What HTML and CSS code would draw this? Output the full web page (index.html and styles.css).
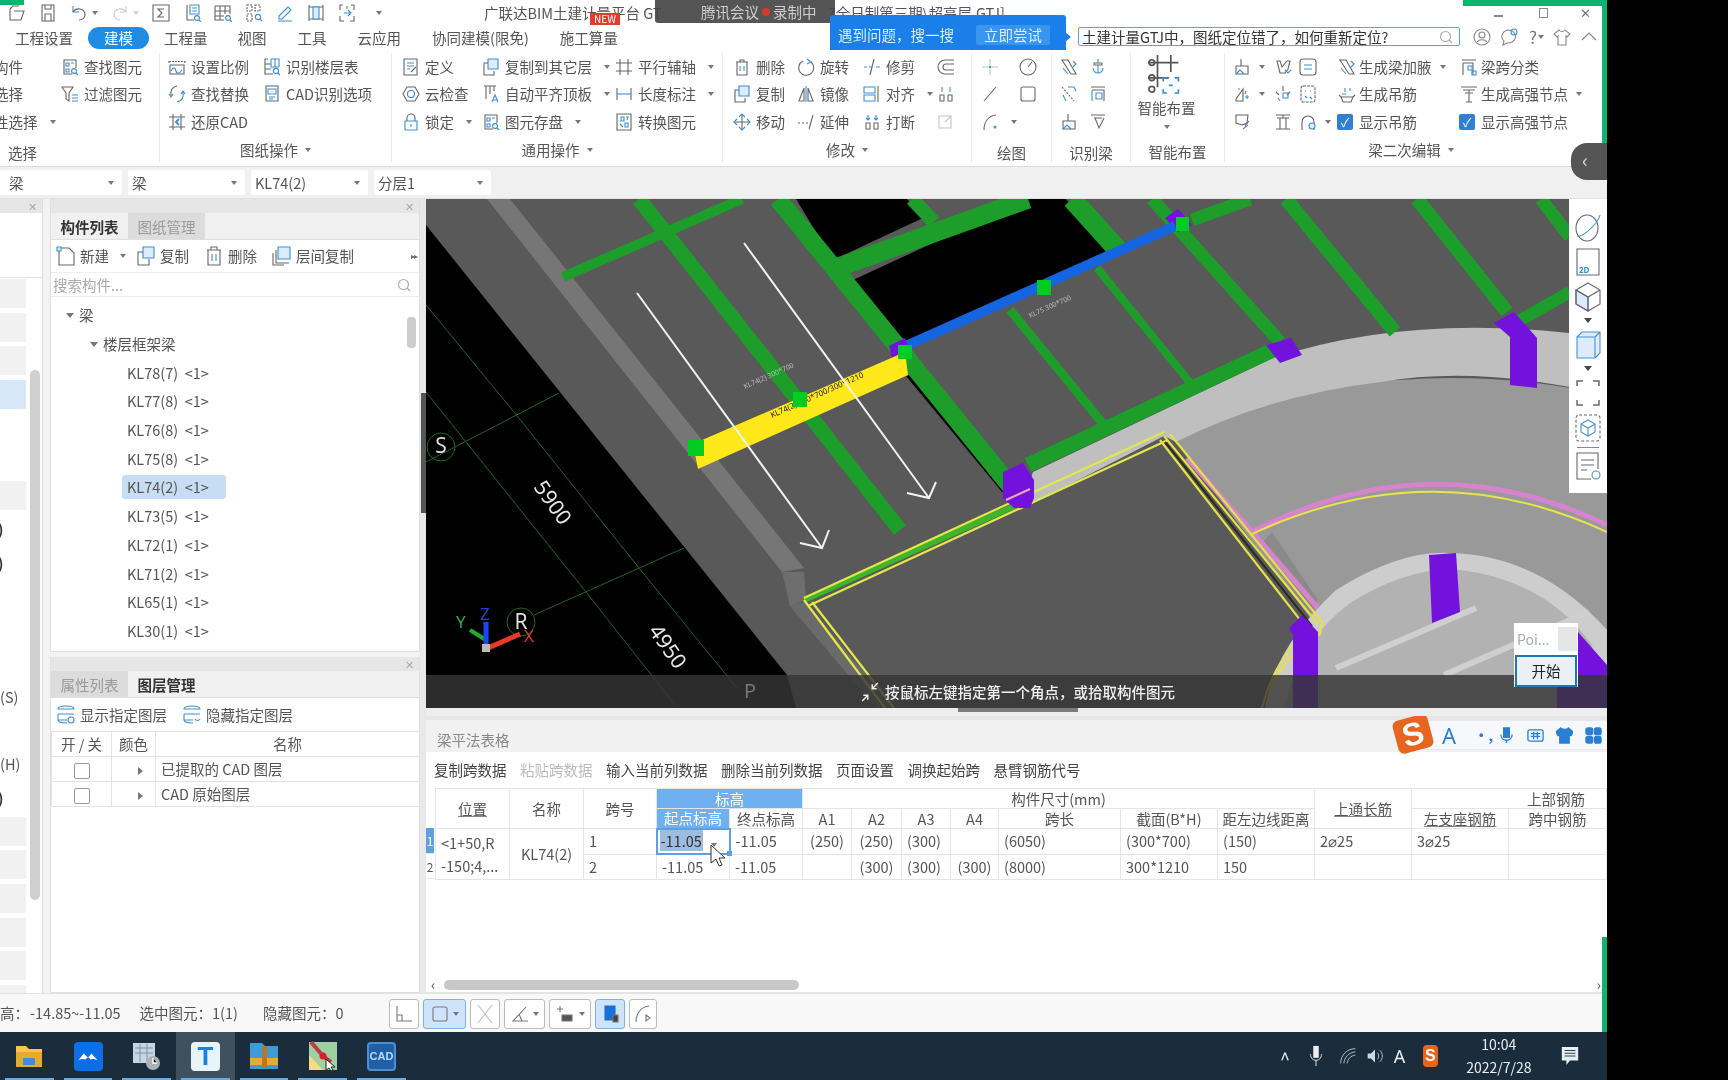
FILE: index.html
```html
<!DOCTYPE html>
<html lang="zh-CN">
<head>
<meta charset="utf-8">
<title>广联达BIM土建计量平台 GTJ2021</title>
<link rel="stylesheet" href="styles.css">
</head>
<body>
<svg class="defs" aria-hidden="true">
<symbol id="q-open" viewBox="0 0 18 18"><path d="M2 5v11h11l3-9H6M2 5l3-3h6"/></symbol>
<symbol id="q-save" viewBox="0 0 18 18"><path d="M3 1h12v16H3zM6 1v4h6V1M6 10h6v7H6z"/></symbol>
<symbol id="q-undo" viewBox="0 0 18 18"><path d="M3 2v6h6" class="b"/><path d="M3 8c3-5 12-4 12 3 0 3-3 5-6 5"/></symbol>
<symbol id="q-redo" viewBox="0 0 18 18"><path d="M15 2v6H9"/><path d="M15 8c-3-5-12-4-12 3 0 3 3 5 6 5"/></symbol>
<symbol id="q-sigma" viewBox="0 0 18 18"><path d="M1 1h16v16H1z"/><path d="M12 5H6l4 4-4 4h6"/></symbol>
<symbol id="q-list" viewBox="0 0 18 18"><path d="M4 1v15h7"/><path class="b" d="M7 1h9v9H7zM9 4h5M9 7h5"/><circle class="b" cx="14" cy="14" r="2.400"/><path class="b" d="M16 16l2 2"/></symbol>
<symbol id="q-tbl" viewBox="0 0 18 18"><path d="M1 2h15v8M1 2v14h9M1 7h15M1 12h9M6 2v14M11 2v8"/><circle class="b" cx="14" cy="14" r="2.400"/><path class="b" d="M16 16l2 2"/></symbol>
<symbol id="q-dash" viewBox="0 0 18 18"><path d="M2 1h5v6H2zM10 1h5v6h-5zM2 10h5v7H2z" stroke-dasharray="2 1"/><circle class="b" cx="13" cy="13" r="2.600"/><path class="b" d="M15 15l2 2"/></symbol>
<symbol id="q-pen" viewBox="0 0 18 18"><path d="M3 12l9-9 3 3-9 9H3zM2 17h14" class="b"/></symbol>
<symbol id="q-bars" viewBox="0 0 18 18"><path d="M2 1v16M16 1v16M2 3h14M2 15h14"/><path class="b f" d="M6 3h6v12H6z"/></symbol>
<symbol id="q-brk" viewBox="0 0 18 18"><path d="M5 1H2v5M13 1h3v5M2 12v5h4M16 12v5h-4"/><path class="b" d="M6 9h6M10 6l3 3-3 3M9 2v3"/></symbol>
<symbol id="i-find" viewBox="0 0 18 18"><path d="M11 16H3V2h12v8"/><path class="b" d="M5 5h3v3H5zM5 11h3v3H5zM10 5h3"/><circle class="b" cx="13" cy="13" r="2.400"/><path class="b" d="M15 15l2 2"/></symbol>
<symbol id="i-filter" viewBox="0 0 18 18"><path d="M1 2h11L8 8v8L5 14V8z"/><path class="b" d="M11 10h6M11 13h6M11 16h6"/></symbol>
<symbol id="i-scale" viewBox="0 0 18 18"><path d="M1 5V2m16 3V2M1 3.500h16" stroke-dasharray="2 1"/><path d="M2 7h14v9H2z"/><path class="b" d="M3 13c2-4 4-4 5 0s4 2 6-1"/></symbol>
<symbol id="i-floors" viewBox="0 0 18 18"><path d="M5 1H2v15h8M2 6h6M2 11h6"/><path class="b" d="M8 1h8v8M8 1v8h8M12 1v8"/><circle class="b" cx="13" cy="13" r="2.600"/><path class="b" d="M15 15l2 2"/></symbol>
<symbol id="i-replace" viewBox="0 0 18 18"><path d="M9 1C4 2 2 5 3 11"/><path class="b" d="M9 17c5-1 7-4 6-10M1 9l2 3 2-3M13 9l2-3 2 3"/></symbol>
<symbol id="i-cad" viewBox="0 0 18 18"><path d="M3 1h12v15H3z"/><path class="b" d="M5 4h8v5H5zM6 12h6M6 14h4"/></symbol>
<symbol id="i-restore" viewBox="0 0 18 18"><path d="M1 4h16M1 14h16M5 1v16M13 1v16"/><path class="b" d="M11 6L8 9l3 3" stroke-width="2"/></symbol>
<symbol id="i-define" viewBox="0 0 18 18"><path d="M2 1h13v16H2z"/><path class="b" d="M5 5h7M5 8h7M5 11h3"/><path d="M9 14l5-5"/></symbol>
<symbol id="i-cloud" viewBox="0 0 18 18"><path d="M5 2h8l4 7-4 7H5L1 9z"/><circle class="b" cx="9" cy="9" r="3.500"/></symbol>
<symbol id="i-lock" viewBox="0 0 18 18"><path d="M5 8V5a4 4 0 018 0v3"/><path class="b" d="M3 8h12v9H3zM9 11v3"/></symbol>
<symbol id="i-copy" viewBox="0 0 18 18"><path class="b f" d="M6 1h10v10H6z"/><path d="M6 5H2v12h10v-4"/></symbol>
<symbol id="i-top" viewBox="0 0 18 18"><path d="M2 1h12M4 1v13M8 1v8M12 1v5"/><path class="b" d="M10 17l3-7 3 7M11 15h4"/></symbol>
<symbol id="i-par" viewBox="0 0 18 18"><path d="M1 5h16M1 13h16M5 1v16M13 1v16"/></symbol>
<symbol id="i-len" viewBox="0 0 18 18"><path d="M2 3v12M16 3v12"/><path class="b" d="M2 9h14"/></symbol>
<symbol id="i-conv" viewBox="0 0 18 18"><path d="M2 1h14v16H2z"/><path class="b" d="M6 4h3v4H6zM10 10h3v4h-3zM11 4h2l-1 3M5 11l3 3"/></symbol>
<symbol id="i-del" viewBox="0 0 18 18"><path d="M3 4h12M7 4V2h4v2M4 4v13h10V4"/><path class="b" d="M7 8v5M11 8v5"/></symbol>
<symbol id="i-rot" viewBox="0 0 18 18"><path d="M6 3a7.500 7.500 0 108 1"/><path class="b" d="M10 1l4 3-4 2"/></symbol>
<symbol id="i-mir" viewBox="0 0 18 18"><path d="M7 3L2 16h5zM11 3l5 13h-5z"/><path class="b" d="M9 1v16"/></symbol>
<symbol id="i-move" viewBox="0 0 18 18"><path d="M9 1v16M1 9h16"/><path class="b" d="M6 4l3-3 3 3M6 14l3 3 3-3M4 6L1 9l3 3M14 6l3 3-3 3"/></symbol>
<symbol id="i-ext" viewBox="0 0 18 18"><path d="M1 10h2M5 10h2M9 10h2"/><path d="M12 16l4-14"/></symbol>
<symbol id="i-trim" viewBox="0 0 18 18"><path d="M11 1L7 17"/><path class="b" d="M1 9h3M6 9h3M13 9h4"/></symbol>
<symbol id="i-align" viewBox="0 0 18 18"><path class="b" d="M1 2h11v6H1zM1 10h11v6H1z"/><path d="M15 1v16"/></symbol>
<symbol id="i-brk" viewBox="0 0 18 18"><path d="M3 10h4v6H3zM11 10h4v6h-4z"/><path class="b" d="M5 2v5M13 2v5M3 5l2 2 2-2M11 5l2 2 2-2"/></symbol>
<symbol id="i-off" viewBox="0 0 18 18"><path d="M17 2H8a7 7 0 000 14h9M17 6H9a3 3 0 000 6h8"/></symbol>
<symbol id="i-dots" viewBox="0 0 18 18"><path d="M3 10h4v6H3zM11 10h4v6h-4z"/><path class="b" d="M5 2v5M13 2v5"/></symbol>
<symbol id="i-ext2" viewBox="0 0 18 18" ><path class="g" d="M2 3h12v12H2zM8 9l6-6"/></symbol>
<symbol id="i-cross" viewBox="0 0 18 18"><path class="g" d="M9 1v6M9 11v6M1 9h6M11 9h6"/><circle class="b" cx="9" cy="9" r=".8"/></symbol>
<symbol id="i-gauge" viewBox="0 0 18 18"><circle cx="9" cy="9" r="8"/><path d="M9 9l4-5"/></symbol>
<symbol id="i-line" viewBox="0 0 18 18"><path d="M3 16L15 2"/></symbol>
<symbol id="i-sq" viewBox="0 0 18 18"><rect x="2" y="2" width="14" height="14" rx="2"/></symbol>
<symbol id="i-arc" viewBox="0 0 18 18"><path d="M3 17C3 8 8 3 15 2"/><circle class="b" cx="14" cy="14" r="1"/></symbol>
<symbol id="i-b1" viewBox="0 0 18 18"><path d="M2 2h6L16 16h-5z"/><path class="b" d="M3 10l5 6M13 3l3 3-3 3"/></symbol>
<symbol id="i-b2" viewBox="0 0 18 18"><path d="M5 5h8v2H5z"/><path class="b" d="M9 1v4M4 10a5 5 0 0010 0M9 7v8"/></symbol>
<symbol id="i-b3" viewBox="0 0 18 18"><path d="M2 2l12 14" stroke-dasharray="2 1.500"/><path class="b" d="M8 2h6l2 4M3 10l3 6"/></symbol>
<symbol id="i-b4" viewBox="0 0 18 18"><path d="M2 2h14M3 5h12v11"/><path class="b" d="M3 5v11M7 8h6v6H7z"/></symbol>
<symbol id="i-b6" viewBox="0 0 18 18"><path d="M2 2h14M5 5h8M6 5l4 10 5-10"/></symbol>
<symbol id="i-e1" viewBox="0 0 18 18"><path d="M8 1v7H3v8h12V8H8"/><path class="b" d="M3 16l4-4 4 4"/></symbol>
<symbol id="i-e2" viewBox="0 0 18 18"><path d="M3 3h3l2 6 5-6h3l-2 8-3 4H6z"/><path class="b" d="M11 12l3 3 3-3"/></symbol>
<symbol id="i-e3" viewBox="0 0 18 18"><rect x="1" y="1" width="16" height="16" rx="3"/><path class="b" d="M5 7h8M5 11h8"/></symbol>
<symbol id="i-e4" viewBox="0 0 18 18"><path d="M10 16V4l-7 10v2zM13 6l-1 3"/><path class="b" d="M5 4h2M12 12h4M14 10v4"/></symbol>
<symbol id="i-e6" viewBox="0 0 18 18"><path d="M9 1v5M2 7l3 3M16 7l-3 3"/><path class="b" d="M9 8h5v5H9zM4 13l2 3"/></symbol>
<symbol id="i-e7" viewBox="0 0 18 18"><rect x="2" y="1" width="14" height="16" rx="2" stroke-dasharray="3 1"/><path class="b" d="M6 6h1M11 6h1M6 11l2 2M11 12l2 2"/></symbol>
<symbol id="i-e8" viewBox="0 0 18 18"><path d="M3 2h12l-1 8-5 2-6-2zM12 13l4-5"/><path class="b" d="M10 16l5-4"/></symbol>
<symbol id="i-e9" viewBox="0 0 18 18"><path d="M2 2h14M9 2v3M3 5h12M6 5v11M12 5v11M2 16h14"/></symbol>
<symbol id="i-e10" viewBox="0 0 18 18"><path d="M3 17V9a6 6 0 0112 0v8"/><circle class="b f" cx="13" cy="13" r="3"/></symbol>
<symbol id="i-e11" viewBox="0 0 18 18"><path d="M2 2h14M3 5h10v12M3 5v12"/><path class="b" d="M8 8h4v4H8zM12 13h4v4h-4z"/></symbol>
<symbol id="i-e12" viewBox="0 0 18 18"><path d="M1 2h16M3 5h12M9 5v12M5 8h8M6 17h6"/></symbol>
<symbol id="i-e13" viewBox="0 0 18 18"><path class="b" d="M7 3v4M4 9h4M12 3v3"/><path d="M3 12h12l-2 5H5zM1 10l2 2M17 10l-2 2"/></symbol>
<symbol id="i-new" viewBox="0 0 20 20"><path d="M3 2h10l5 5v12H3z"/><path class="b f" d="M1 1h4v4H1z"/></symbol>
<symbol id="i-tcopy" viewBox="0 0 20 20"><path class="b f" d="M7 1h11v11H7z"/><path d="M7 6H2v13h11v-6"/></symbol>
<symbol id="i-tdel" viewBox="0 0 20 20"><path d="M3 4h14M7 4V1h6v3M4 4v15h12V4"/><path class="b" d="M8 8v7M12 8v7"/></symbol>
<symbol id="i-tlay" viewBox="0 0 20 20"><path class="b f" d="M6 1h12v12H6z"/><path d="M4 4v13h13M1 7v12h11"/></symbol>
<symbol id="i-lshow" viewBox="0 0 20 20"><path class="b" d="M2 4c0-4 16-4 16 0H2zM2 9h16M2 15c0 3 7 3 9 3M2 9v6h9"/><circle class="b" cx="15" cy="15" r="3"/></symbol>
<symbol id="i-lhide" viewBox="0 0 20 20"><path class="b" d="M2 4c0-4 16-4 16 0H2zM2 9h16M2 15c0 3 7 3 9 3M2 9v6h9M13 14c1 2 4 2 5 0"/></symbol>
<symbol id="i-mag" viewBox="0 0 14 14"><circle cx="6.500" cy="6.500" r="5"/><path d="M10 10l3 3"/></symbol>
</svg>

<div class="screen">
  <header class="titlebar">
    <svg class="ico"><use href="#q-open"/></svg>
    <svg class="ico"><use href="#q-save"/></svg>
    <svg class="ico"><use href="#q-undo"/></svg><i class="car tight"></i>
    <svg class="ico faded"><use href="#q-redo"/></svg><i class="car tight faded"></i>
    <svg class="ico"><use href="#q-sigma"/></svg>
    <svg class="ico"><use href="#q-list"/></svg>
    <svg class="ico"><use href="#q-tbl"/></svg>
    <svg class="ico"><use href="#q-dash"/></svg>
    <svg class="ico"><use href="#q-pen"/></svg>
    <svg class="ico"><use href="#q-bars"/></svg>
    <svg class="ico"><use href="#q-brk"/></svg>
    <i class="car"></i>
    <span class="title">广联达BIM土建计量平台 GT</span>
    <span class="title-rest">7全日制第三期\超高层.GTJ]</span>
    <span class="new-badge">NEW</span>
    <div class="rec"><span>腾讯会议</span><b class="rec-dot"></b><span>录制中</span></div>
    <span class="stripe-l"></span><span class="stripe-r"></span>
    <div class="winctl"><span class="wmin"></span><span class="wres"></span><span class="wclose">✕</span></div>
  </header>

  <nav class="tabs">
    <span class="tab t1">工程设置</span>
    <span class="tab active">建模</span>
    <span class="tab">工程量</span>
    <span class="tab wide">视图</span>
    <span class="tab wide">工具</span>
    <span class="tab wide">云应用</span>
    <span class="tab wide">协同建模(限免)</span>
    <span class="tab wide">施工算量</span>
    <div class="search"><span>土建计量GTJ中，图纸定位错了，如何重新定位?</span><svg class="mag"><use href="#i-mag"/></svg></div>
    <div class="topicons">
      <svg class="ti" viewBox="0 0 18 18"><circle cx="9" cy="9" r="8"/><circle cx="9" cy="7" r="3"/><path d="M4 14c2-3 8-3 10 0"/></svg>
      <svg class="ti" viewBox="0 0 18 18"><path d="M9 2a7.500 6.500 0 00-5 11l-1 4 4-2a7.500 6.500 0 002-13z"/><circle class="b" cx="14" cy="4" r="3"/></svg>
      <span class="qm">?</span><i class="car"></i>
      <svg class="ti" viewBox="0 0 18 18"><path d="M6 2L1 6l3 3 1-1v9h8V8l1 1 3-3-5-4c-1 2-5 2-6 0z"/></svg>
      <svg class="ti" viewBox="0 0 18 18"><path d="M2 12l7-7 7 7"/></svg>
    </div>
    <div class="promo"><span>遇到问题，搜一搜</span><span class="try">立即尝试</span></div>
  </nav>

  <section class="ribbon">
    <div class="grp g1">
      <div class="rows">
        <div class="it">构件</div><div class="it">选择</div><div class="it">性选择<i class="car"></i></div>
        <div class="it"><svg class="ico"><use href="#i-find"/></svg>查找图元</div>
        <div class="it"><svg class="ico"><use href="#i-filter"/></svg>过滤图元</div>
      </div>
      <div class="lbl">选择</div>
    </div>
    <div class="grp g2">
      <div class="rows">
        <div class="it"><svg class="ico"><use href="#i-scale"/></svg>设置比例</div>
        <div class="it"><svg class="ico"><use href="#i-replace"/></svg>查找替换</div>
        <div class="it"><svg class="ico"><use href="#i-restore"/></svg>还原CAD</div>
        <div class="it"><svg class="ico"><use href="#i-floors"/></svg>识别楼层表</div>
        <div class="it"><svg class="ico"><use href="#i-cad"/></svg>CAD识别选项</div>
      </div>
      <div class="lbl">图纸操作<i class="car"></i></div>
    </div>
    <div class="grp g3">
      <div class="rows">
        <div class="it"><svg class="ico"><use href="#i-define"/></svg>定义</div>
        <div class="it"><svg class="ico"><use href="#i-cloud"/></svg>云检查</div>
        <div class="it"><svg class="ico"><use href="#i-lock"/></svg>锁定<i class="car"></i></div>
        <div class="it"><svg class="ico"><use href="#i-copy"/></svg>复制到其它层<i class="car"></i></div>
        <div class="it"><svg class="ico"><use href="#i-top"/></svg>自动平齐顶板<i class="car"></i></div>
        <div class="it"><svg class="ico"><use href="#i-find"/></svg>图元存盘<i class="car"></i></div>
        <div class="it"><svg class="ico"><use href="#i-par"/></svg>平行辅轴<i class="car"></i></div>
        <div class="it"><svg class="ico"><use href="#i-len"/></svg>长度标注<i class="car"></i></div>
        <div class="it"><svg class="ico"><use href="#i-conv"/></svg>转换图元</div>
      </div>
      <div class="lbl">通用操作<i class="car"></i></div>
    </div>
    <div class="grp g4">
      <div class="rows">
        <div class="it"><svg class="ico"><use href="#i-del"/></svg>删除</div>
        <div class="it"><svg class="ico"><use href="#i-copy"/></svg>复制</div>
        <div class="it"><svg class="ico"><use href="#i-move"/></svg>移动</div>
        <div class="it"><svg class="ico"><use href="#i-rot"/></svg>旋转</div>
        <div class="it"><svg class="ico"><use href="#i-mir"/></svg>镜像</div>
        <div class="it"><svg class="ico"><use href="#i-ext"/></svg>延伸</div>
        <div class="it"><svg class="ico"><use href="#i-trim"/></svg>修剪</div>
        <div class="it"><svg class="ico"><use href="#i-align"/></svg>对齐<i class="car"></i></div>
        <div class="it"><svg class="ico"><use href="#i-brk"/></svg>打断</div>
        <div class="it"><svg class="ico"><use href="#i-off"/></svg></div>
        <div class="it"><svg class="ico"><use href="#i-dots"/></svg></div>
        <div class="it"><svg class="ico"><use href="#i-ext2"/></svg></div>
      </div>
      <div class="lbl">修改<i class="car"></i></div>
    </div>
    <div class="grp g5">
      <div class="rows">
        <div class="it"><svg class="ico"><use href="#i-cross"/></svg></div>
        <div class="it"><svg class="ico"><use href="#i-line"/></svg></div>
        <div class="it"><svg class="ico"><use href="#i-arc"/></svg><i class="car"></i></div>
        <div class="it"><svg class="ico"><use href="#i-gauge"/></svg></div>
        <div class="it"><svg class="ico"><use href="#i-sq"/></svg></div>
      </div>
      <div class="lbl">绘图</div>
    </div>
    <div class="grp g6">
      <div class="rows">
        <div class="it"><svg class="ico"><use href="#i-b1"/></svg></div>
        <div class="it"><svg class="ico"><use href="#i-b3"/></svg></div>
        <div class="it"><svg class="ico"><use href="#i-e1"/></svg></div>
        <div class="it"><svg class="ico"><use href="#i-b2"/></svg></div>
        <div class="it"><svg class="ico"><use href="#i-b4"/></svg></div>
        <div class="it"><svg class="ico"><use href="#i-b6"/></svg></div>
      </div>
      <div class="lbl">识别梁</div>
    </div>
    <div class="grp g7">
      <div class="big">
        <svg class="bigico" viewBox="0 0 40 44"><path d="M0 10h32M0 26h22M10 2v34M24 2v18"/><circle cx="4" cy="10" r="3"/><circle cx="4" cy="26" r="3"/><circle cx="4" cy="38" r="3"/><path class="bb" d="M20 26h-4v4M28 26h4v4M20 42h-4v-4M28 42h4v-4M22 34h4"/></svg>
        <span>智能布置</span>
        <i class="car"></i>
      </div>
      <div class="lbl">智能布置</div>
    </div>
    <div class="grp g8">
      <div class="rows">
        <div class="it"><svg class="ico"><use href="#i-e1"/></svg><i class="car"></i></div>
        <div class="it"><svg class="ico"><use href="#i-e4"/></svg><i class="car"></i></div>
        <div class="it"><svg class="ico"><use href="#i-e8"/></svg></div>
        <div class="it"><svg class="ico"><use href="#i-e2"/></svg></div>
        <div class="it"><svg class="ico"><use href="#i-e6"/></svg></div>
        <div class="it"><svg class="ico"><use href="#i-e9"/></svg></div>
        <div class="it"><svg class="ico"><use href="#i-e3"/></svg></div>
        <div class="it"><svg class="ico"><use href="#i-e7"/></svg></div>
        <div class="it"><svg class="ico"><use href="#i-e10"/></svg><i class="car"></i></div>
        <div class="it"><svg class="ico"><use href="#i-b1"/></svg>生成梁加腋<i class="car"></i></div>
        <div class="it"><svg class="ico"><use href="#i-e13"/></svg>生成吊筋</div>
        <div class="it"><span class="chk">✓</span>显示吊筋</div>
        <div class="it"><svg class="ico"><use href="#i-e11"/></svg>梁跨分类</div>
        <div class="it"><svg class="ico"><use href="#i-e12"/></svg>生成高强节点<i class="car"></i></div>
        <div class="it"><span class="chk">✓</span>显示高强节点</div>
      </div>
      <div class="lbl">梁二次编辑<i class="car"></i></div>
    </div>
    <div class="collapse"><span>‹</span></div>
  </section>

  <div class="selbar">
    <div class="sel s1">梁<i class="car"></i></div>
    <div class="sel">梁<i class="car"></i></div>
    <div class="sel">KL74(2)<i class="car"></i></div>
    <div class="sel">分层1<i class="car"></i></div>
  </div>

  <main class="work">
    <aside class="stub">
      <div class="phead"><span class="x">✕</span></div>
      <div class="stub-top"></div>
      <div class="stub-list">
        <div class="sr"><b></b></div><div class="sr"><b></b></div><div class="sr"><b></b></div><div class="sr"><b class="on"></b></div>
        <div class="sr"></div><div class="sr"></div><div class="sr"><b></b></div>
        <div class="sr"><span class="cut">)</span></div><div class="sr"><span class="cut">)</span></div>
        <div class="sr"></div><div class="sr"></div><div class="sr"></div>
        <div class="sr"><span>(S)</span></div><div class="sr"></div>
        <div class="sr"><span>(H)</span></div><div class="sr"><span class="cut">)</span></div>
        <div class="sr"><b></b></div><div class="sr"><b></b></div><div class="sr"><b></b></div><div class="sr"><b></b></div><div class="sr"><b></b></div><div class="sr"><b></b></div>
      </div>
      <span class="stub-scroll"></span>
    </aside>

    <div class="panels">
      <section class="panel top">
        <div class="phead"><span class="x">✕</span></div>
        <div class="ptabs"><span class="ptab on strong">构件列表</span><span class="ptab off">图纸管理</span></div>
        <div class="ptools">
          <span class="pt p1"><svg class="ico20"><use href="#i-new"/></svg>新建<i class="car"></i></span>
          <span class="pt"><svg class="ico20"><use href="#i-tcopy"/></svg>复制</span>
          <span class="pt"><svg class="ico20"><use href="#i-tdel"/></svg>删除</span>
          <span class="pt"><svg class="ico20"><use href="#i-tlay"/></svg>层间复制</span>
          <span class="more">▸▸</span>
        </div>
        <div class="psearch"><span>搜索构件...</span><svg class="mag"><use href="#i-mag"/></svg></div>
        <ul class="tree">
          <li class="n0"><i class="tw"></i>梁</li>
          <li class="n1"><i class="tw"></i>楼层框架梁</li>
          <li class="n2"><span>KL78(7)&nbsp; &lt;1&gt;</span></li>
          <li class="n2"><span>KL77(8)&nbsp; &lt;1&gt;</span></li>
          <li class="n2"><span>KL76(8)&nbsp; &lt;1&gt;</span></li>
          <li class="n2"><span>KL75(8)&nbsp; &lt;1&gt;</span></li>
          <li class="n2 cur"><span>KL74(2)&nbsp; &lt;1&gt;</span></li>
          <li class="n2"><span>KL73(5)&nbsp; &lt;1&gt;</span></li>
          <li class="n2"><span>KL72(1)&nbsp; &lt;1&gt;</span></li>
          <li class="n2"><span>KL71(2)&nbsp; &lt;1&gt;</span></li>
          <li class="n2"><span>KL65(1)&nbsp; &lt;1&gt;</span></li>
          <li class="n2"><span>KL30(1)&nbsp; &lt;1&gt;</span></li>
        </ul>
        <span class="tree-scroll"></span>
      </section>
      <section class="panel low">
        <div class="phead"><span class="x">✕</span></div>
        <div class="ptabs"><span class="ptab off">属性列表</span><span class="ptab on strong">图层管理</span></div>
        <div class="ptools lay">
          <span class="pt"><svg class="ico20"><use href="#i-lshow"/></svg>显示指定图层</span>
          <span class="pt"><svg class="ico20"><use href="#i-lhide"/></svg>隐藏指定图层</span>
        </div>
        <table class="ltable">
          <colgroup><col class="lc1"><col class="lc2"><col></colgroup>
          <tr><th>开 / 关</th><th>颜色</th><th>名称</th></tr>
          <tr><td class="c"><span class="box"></span></td><td class="c"><i class="tri"></i></td><td>已提取的 CAD 图层</td></tr>
          <tr><td class="c"><span class="box"></span></td><td class="c"><i class="tri"></i></td><td>CAD 原始图层</td></tr>
        </table>
      </section>
    </div>

    <div class="splitter"><span></span></div>

    <div class="rightcol">
      <div class="viewport">
        <svg class="scene" viewBox="426 199 1181 509" aria-label="三维模型视图">
          <rect x="426" y="199" width="1181" height="509" fill="#000"/>
          <g class="grid">
            <path d="M426 305L514 412 639 568 737 688M426 392L586 592 675 705M426 462L559 393M534 615L684 548"/>
            <circle cx="441" cy="447" r="14"/><circle cx="521" cy="622" r="14"/>
          </g>
          <path fill="#595959" d="M426 225L426 199H1607V708H796L787 675Z"/>
          <path fill="#767676" d="M487 199H510L804 568 782 572Z"/>
          <path fill="#6e6e6e" d="M782 572H804L806 600 790 606Z"/>
          <path fill="#6a6a6a" d="M789 605L805 602 895 708H876Z"/>
          <path fill="#000" d="M796 199H907L923 218 833 260Z"/>
          <path fill="#000" d="M853 280L1028 199H1066L1108 252 912 344 898 335Z"/>
          <path fill="#000" d="M906 376L918 372 1012 490 1002 492Z"/>
          <path fill="#999" d="M1176 442Q1280 380 1400 380Q1500 372 1607 395V708H1266L1318 628Z"/>
          <path fill="#bfbfbf" d="M1033 472L1273 358Q1420 310 1607 338V395Q1480 365 1381 382 1270 395 1176 442L1164 436 1020 510Z"/>
          <path fill="#cdcdcd" d="M1266 708Q1272 650 1336 590 1400 550 1450 553 1540 555 1607 630V708Z"/>
          <path fill="#b2b2b2" d="M1284 708Q1300 640 1350 603 1410 566 1460 570 1545 580 1592 645L1600 708Z"/>
          <g fill="none" stroke="#cfcfcf" stroke-width="6"><path d="M1336 668L1476 608M1444 675L1589 612"/></g>
          <path fill="#8a8a8a" d="M1260 545L1272 532 1318 600 1310 615Z"/>
          <g fill="none" class="beam">
            <path stroke-width="15" d="M639 199L900 530"/>
            <path stroke-width="18" d="M778 199L1012 488"/>
            <path stroke-width="14" d="M912 199L934 222"/>
            <path stroke-width="20" d="M1072 199L1118 250"/>
            <path stroke-width="13" d="M1152 199L1280 342"/>
            <path stroke-width="14" d="M1286 199L1395 332"/>
            <path stroke-width="14" d="M1417 199L1507 312"/>
            <path stroke-width="13" d="M1541 199L1570 237"/>
            <path stroke-width="8" d="M1097 268L1192 385"/>
            <path stroke-width="9" d="M1010 310L1104 425"/>
            <path stroke-width="10" d="M563 277L742 199"/>
            <path stroke-width="19" d="M836 268L1028 199"/>
            <path stroke-width="13" d="M1192 220L1250 199"/>
            <path stroke-width="15" d="M1028 465L1273 350"/>
            <path stroke-width="12" d="M1517 322L1570 292"/>
          </g>
          <path d="M804 600L1028 500" stroke="#3fb52a" stroke-width="6" fill="none"/>
          <g fill="none" stroke="#e4e64e" stroke-width="2.200">
            <path d="M804 598L1164 432M808 606L1168 440"/>
            <path d="M804 600L885 708M812 602L894 708"/>
          </g>
          <path fill="none" stroke="#d684ce" stroke-width="5" d="M1187 458L1255 535 1318 608M1252 532Q1430 440 1607 525"/>
          <path fill="none" stroke="#ece24c" stroke-width="2" d="M1250 535Q1430 450 1607 532"/>
          <path fill="none" stroke="#e5e04a" stroke-width="2.200" d="M1164 436L1318 624M1170 434L1322 622 1320 634Q1275 660 1266 708M1160 440L1308 630Q1274 660 1262 708"/>
          <path fill="none" stroke="#2a2a20" stroke-width="2" d="M1165 442L1312 626"/>
          <g fill="#7212dc">
            <path d="M889 346L905 338 912 352 892 358Z"/>
            <path d="M1003 472L1023 463 1034 480V498L1030 508 1014 508 1003 498Z"/>
            <path d="M1165 218L1178 209 1192 225 1178 232Z"/>
            <path d="M1266 345L1291 338 1302 355 1280 363Z"/>
            <path d="M1494 323L1514 312 1537 338V388L1510 385V337Z"/>
            <path d="M1429 555L1456 553 1460 612 1432 623Z"/>
            <path d="M1289 628L1302 615 1318 632V708H1293V635Z"/>
            <path d="M1578 632L1607 665V708H1557V675Z"/>
          </g>
          <path d="M1006 500L1030 489" stroke="#f0a8b8" stroke-width="2"/>
          <path fill="#ffe81a" d="M693 444L905 352 908 375 698 469Z"/>
          <path fill="none" stroke="#1565e0" stroke-width="10" d="M908 345L1175 226"/>
          <text class="bt" transform="translate(772 418) rotate(-24)">KL74(2) 300*700/300*1210</text>
          <text class="wt" transform="translate(745 389) rotate(-24)">KL74(2) 300*700</text>
          <text class="wt" transform="translate(1030 318) rotate(-24)">KL75 300*700</text>
          <g fill="#00cc22">
            <rect x="688" y="440" width="16" height="16"/><rect x="793" y="392" width="14" height="15"/>
            <rect x="898" y="345" width="14" height="14"/><rect x="1037" y="280" width="14" height="15"/>
            <rect x="1176" y="217" width="13" height="14"/>
          </g>
          <g fill="none" stroke="#f2f2f2" stroke-width="2">
            <path d="M637 293L822 548M800 543L822 548 829 530"/>
            <path d="M744 243L929 498M907 493L929 498 936 482"/>
          </g>
          <text class="dim" transform="translate(533 487) rotate(55)">5900</text>
          <text class="dim" transform="translate(648 631) rotate(55)">4950</text>
          <text class="gl" x="441" y="453" text-anchor="middle">S</text>
          <text class="gl" x="521" y="629" text-anchor="middle">R</text>
          <g>
            <text class="ax" x="456" y="628" fill="#2fae3a">Y</text>
            <text class="ax" x="480" y="620" fill="#2340d8">Z</text>
            <text class="ax" x="524" y="642" fill="#e23a2a">X</text>
            <path d="M486 640L470 630" stroke="#22aa33" stroke-width="4"/>
            <path d="M486 646V622" stroke="#1a45ff" stroke-width="5"/>
            <path d="M488 648L520 634" stroke="#e83a24" stroke-width="5"/>
            <rect x="482" y="644" width="8" height="8" fill="#bbb"/>
          </g>
        </svg>
        <div class="hint">
          <span class="hint-p">P</span>
          <svg class="hint-ic" viewBox="0 0 18 18"><path d="M16 1l-5 5M11 2v4h4M2 17l5-5M3 12h4v4"/></svg>
          <span class="hint-t">按鼠标左键指定第一个角点，或拾取构件图元</span>
        </div>
        <aside class="vtools">
          <svg class="vt" viewBox="0 0 28 30"><ellipse cx="13" cy="16" rx="11" ry="13"/><path class="b" d="M3 24C8 26 24 12 26 3"/></svg>
          <svg class="vt" viewBox="0 0 28 30"><path d="M3 2h22v26H3z"/><text class="v2d" x="5" y="26">2D</text></svg>
          <svg class="vt" viewBox="0 0 28 30"><path class="f" d="M2 8l12 7v14l-12-7z"/><path d="M14 1l12 7v14l-12 7-12-7V8zM2 8l12 7 12-7M14 15v14"/></svg>
          <i class="tridown"></i>
          <svg class="vt" viewBox="0 0 28 30"><path class="b f" d="M3 7h18v21H3zM3 7l5-5h18v21l-5 5M21 7l5-5"/></svg>
          <i class="tridown"></i>
          <svg class="vt" viewBox="0 0 28 30"><path d="M3 8V3h6M19 3h6v5M25 22v5h-6M9 27H3v-5" stroke-width="1.500"/></svg>
          <svg class="vt" viewBox="0 0 28 30"><rect x="2" y="2" width="24" height="26" rx="3" stroke-dasharray="3 2"/><path class="b" d="M14 7l7 4v8l-7 4-7-4v-8zM7 11l7 4 7-4M14 15v8"/></svg>
          <span class="vsep"></span>
          <svg class="vt" viewBox="0 0 28 30"><path d="M24 18V2H3v26h14M7 9h13M7 14h13M7 19h6"/><circle class="b" cx="22" cy="24" r="4"/></svg>
        </aside>
        <div class="poi">
          <div class="poi-row"><span>Poi...</span><b></b></div>
          <button class="poi-btn" type="button">开始</button>
        </div>
      </div>
      <div class="vsplit"><span></span></div>

      <section class="tpanel">
        <div class="tp-title">梁平法表格</div>
        <div class="tp-tools">
          <span>复制跨数据</span><span class="dis">粘贴跨数据</span><span>输入当前列数据</span><span>删除当前列数据</span><span>页面设置</span><span>调换起始跨</span><span>悬臂钢筋代号</span>
        </div>
        <div class="tbl-wrap">
          <div class="rownums"><span class="rh"></span><span class="rn on">1</span><span class="rn">2</span></div>
          <table class="ptable">
            <colgroup>
              <col class="w74"><col class="w74"><col class="w73"><col class="w73"><col class="w73"><col class="w49"><col class="w50"><col class="w49"><col class="w48"><col class="w122"><col class="w97"><col class="w97"><col class="w97"><col class="w97"><col class="w98">
            </colgroup>
            <thead>
              <tr><th rowspan="2"><u>位置</u></th><th rowspan="2">名称</th><th rowspan="2">跨号</th><th colspan="2" class="hl">标高</th><th colspan="7">构件尺寸(mm)</th><th rowspan="2"><u>上通长筋</u></th><th colspan="2" class="shift">上部钢筋</th></tr>
              <tr><th class="hl">起点标高</th><th>终点标高</th><th>A1</th><th>A2</th><th>A3</th><th>A4</th><th>跨长</th><th>截面(B*H)</th><th>距左边线距离</th><th><u>左支座钢筋</u></th><th>跨中钢筋</th></tr>
            </thead>
            <tbody>
              <tr><td rowspan="2" class="pos">&lt;1+50,R<br>-150;4,...</td><td rowspan="2" class="ctr">KL74(2)</td><td>1</td><td class="edit"><span class="ed-sel">-11.05</span><i class="car"></i><b class="ed-dot"></b></td><td>-11.05</td><td class="ctr">(250)</td><td class="ctr">(250)</td><td>(300)</td><td></td><td>(6050)</td><td>(300*700)</td><td>(150)</td><td>2⌀25</td><td>3⌀25</td><td></td></tr>
              <tr><td>2</td><td>-11.05</td><td>-11.05</td><td></td><td class="ctr">(300)</td><td>(300)</td><td class="ctr">(300)</td><td>(8000)</td><td>300*1210</td><td>150</td><td></td><td></td><td></td></tr>
            </tbody>
          </table>
        </div>
        <svg class="pointer" viewBox="0 0 16 24"><path d="M1 1v18l5-4 3 7 3-1-3-7h6z"/></svg>
        <div class="tp-fill"></div>
        <div class="hscroll"><i class="hl-arrow">‹</i><span class="thumb"></span><i class="hr-arrow">›</i></div>
        <div class="sogou">
          <span class="s-logo">S</span>
          <span class="s-a">A</span>
          <span class="s-p">•,</span>
          <svg class="s-i" viewBox="0 0 18 18"><path d="M6 1h6v10H6z" fill="#2a7fd4"/><path d="M3 8c0 8 12 8 12 0M9 14v3"/></svg>
          <svg class="s-i" viewBox="0 0 18 18"><rect x="1" y="3" width="16" height="12" rx="2"/><path d="M4 7h10M4 10h10M7 5v8M11 5v8"/></svg>
          <svg class="s-i" viewBox="0 0 18 18"><path fill="#2a7fd4" d="M5 1L0 5l2 4 2-1v9h10V8l2 1 2-4-5-4c-1 2-6 2-8 0z"/></svg>
          <svg class="s-i" viewBox="0 0 18 18"><g fill="#2a7fd4"><rect x="1" y="1" width="7" height="7" rx="2"/><rect x="10" y="1" width="7" height="7" rx="2"/><rect x="1" y="10" width="7" height="7" rx="2"/><rect x="10" y="10" width="7" height="7" rx="2"/></g></svg>
        </div>
      </section>
    </div>
  </main>

  <footer class="status">
    <span class="st1">高：</span><span class="st2">-14.85~-11.05</span><span class="st3">选中图元：1(1)</span><span class="st4">隐藏图元：0</span>
    <div class="sbtns">
      <span class="sb w30"><svg viewBox="0 0 20 20"><path d="M3 2v15h15M3 11h5v6"/></svg></span>
      <span class="sb w43 on"><svg viewBox="0 0 20 20"><rect x="3" y="3" width="14" height="14" rx="2"/></svg><i class="car"></i></span>
      <span class="sb w30"><svg class="lt" viewBox="0 0 20 20"><path d="M3 1l14 18M17 1L3 19"/></svg></span>
      <span class="sb w41"><svg viewBox="0 0 20 20"><path d="M16 3L3 17h15M9 10l3 7"/></svg><i class="car"></i></span>
      <span class="sb w42"><svg viewBox="0 0 20 20"><path d="M1 5h6M4 2v6"/><path d="M6 11h10v6H6z" fill="#555"/></svg><i class="car"></i></span>
      <span class="sb w30 on"><svg viewBox="0 0 20 20"><path d="M5 2h10v14H5z" fill="#1a6fd8" stroke="#1a6fd8"/><path d="M13 11h5v7h-5z" fill="#444"/></svg></span>
      <span class="sb w28"><svg viewBox="0 0 20 20"><path d="M3 18C3 9 8 3 16 2M13 11l4 3-4 3z"/></svg></span>
    </div>
  </footer>

  <div class="taskbar">
    <div class="tk run">
      <svg class="tki" viewBox="0 0 30 30"><path fill="#f6c44f" d="M2 5h10l3 3h13v18H2z"/><path fill="#e9a92e" d="M2 11h26v15H2z"/><rect x="9" y="17" width="12" height="7" fill="#3a8fd8"/></svg>
    </div>
    <div class="tk run"><span class="tile cloud"><svg viewBox="0 0 30 30"><path fill="#fff" d="M4 20l6-8 5 5 4-5 7 8c-4-2-6-2-8-1l-3-3-3 3c-3-1-5-1-8 1z"/></svg></span></div>
    <div class="tk run">
      <svg class="tki" viewBox="0 0 30 30"><rect x="1" y="2" width="22" height="20" fill="#c9d4e2"/><path stroke="#7d93ad" d="M3 7h18M3 12h18M8 3v18M15 3v18"/><circle cx="21" cy="22" r="7" fill="#aab2ba"/><path stroke="#fff" stroke-width="1.500" d="M21 17v5h4"/></svg>
    </div>
    <div class="tk run active"><span class="tile ttile">T</span></div>
    <div class="tk run">
      <svg class="tki" viewBox="0 0 30 30"><path fill="#3f9ad8" d="M1 2h12l3 3h13v23H1z"/><rect x="1" y="17" width="28" height="7" fill="#e8a935"/><rect x="13" y="5" width="5" height="22" fill="#b5772a"/></svg>
    </div>
    <div class="tk run">
      <svg class="tki" viewBox="0 0 30 30"><rect x="1" y="1" width="28" height="28" fill="#9fd0a0"/><path fill="#f5d98c" d="M1 14l14 15H1z"/><path stroke="#c0394a" stroke-width="4" d="M3 1l12 14M15 15l8 6"/><circle cx="15" cy="15" r="3.500" fill="#d91f2a"/><path fill="#fff" stroke="#222" d="M18 18v11l3-2 2 3 2-1-2-3h4z"/></svg>
    </div>
    <div class="tk run"><span class="tile cadt">CAD</span></div>
    <div class="tray">
      <span class="tr-up">^</span>
      <svg class="tr-i" viewBox="0 0 18 24"><path fill="#e7eef5" d="M6 1h6v13H6z"/><path stroke="#e7eef5" fill="none" d="M3 10c0 9 12 9 12 0M9 17v6"/></svg>
      <svg class="tr-i" viewBox="0 0 22 22"><path stroke="#cfd6dc" fill="none" d="M2 20C2 10 10 2 20 2M6 20c0-7 7-14 14-14M10 20c0-5 5-10 10-10"/></svg>
      <svg class="tr-i" viewBox="0 0 22 22"><path fill="#cfd6dc" d="M2 8h4l5-5v16l-5-5H2z"/><path stroke="#cfd6dc" fill="none" d="M14 7c2 2 2 6 0 8M17 4c4 4 4 10 0 14"/></svg>
      <span class="tr-a">A</span>
      <span class="tr-s">S</span>
      <div class="clock"><span>10:04</span><span>2022/7/28</span></div>
      <svg class="tr-n" viewBox="0 0 22 24"><path fill="#e7eef5" d="M2 2h18v15h-9l-4 5v-5H2z"/><path stroke="#1b2c3c" d="M5 6h12M5 9h12M5 12h12"/></svg>
    </div>
  </div>
  <span class="greenbar"></span>
</div>
</body>
</html>
```

FILE: styles.css
```css
*{box-sizing:border-box}
html,body{margin:0;padding:0;height:100%;background:#000;overflow:hidden}
body{font-family:"Noto Sans CJK SC","Noto Sans",sans-serif;font-size:14.5px;line-height:20px;color:#4d4d4d}
.defs{position:absolute;width:0;height:0}
i{font-style:normal}
ul{list-style:none;margin:0;padding:0}
.screen{position:relative;width:1607px;height:1080px;background:#f2f2f2;display:flex;flex-direction:column;overflow:hidden;filter:blur(.4px)}

/* shared icons */
.ico,.ti{width:18px;height:18px;flex:none;fill:none;stroke:#666;stroke-width:1.1}
.ico20{width:20px;height:20px;flex:none;fill:none;stroke:#666;stroke-width:1.1}
.b{stroke:#3a8fd8}
.f{fill:#dcecfb}
.g{stroke:#c4c4c4}
.faded{opacity:.35}
.car{display:inline-block;width:0;height:0;flex:none;border:3px solid transparent;border-top:4px solid #777;border-bottom:0;margin-left:7px}
.car.tight{margin-left:-9px}
.mag{width:14px;height:14px;fill:none;stroke:#aaa;stroke-width:1.100;flex:none}

/* title bar */
.titlebar{position:relative;height:26px;flex:none;background:#fff;display:flex;align-items:center;gap:13px;padding-left:8px}
.title{margin-left:89px;white-space:nowrap;color:#555}
.title-rest{margin-left:153px;white-space:nowrap;color:#555}
.new-badge{position:absolute;left:590px;top:13px;width:30px;height:12px;background:#e23b30;color:#fff;font-size:10px;line-height:12px;text-align:center}
.rec{position:absolute;left:655px;top:0;width:180px;height:23px;background:rgba(70,70,70,.92);color:#cfcfcf;display:flex;align-items:center;padding-left:46px;border-radius:0 0 3px 3px;white-space:nowrap}
.rec-dot{width:8px;height:8px;margin:0 3px;border-radius:50%;background:#d63a2b}
.stripe-l{position:absolute;left:0;top:0;width:24px;height:5px;background:#0cb46f}
.stripe-r{position:absolute;left:1463px;top:0;width:144px;height:6px;background:#0cb46f}
.winctl{position:absolute;left:1490px;top:2px;width:105px;height:22px;display:flex;align-items:center;color:#777;font-size:13px}
.wmin{width:9px;height:2px;background:#888;margin:6px 0 0 4px}
.wres{width:9px;height:10px;border:1px solid #888;margin-left:36px}
.wclose{margin-left:32px;line-height:18px}

/* tabs */
.tabs{position:relative;height:24px;flex:none;background:#fff;display:flex;align-items:center;padding-left:15px}
.tab{white-space:nowrap;margin-right:15px;color:#555;line-height:22px}
.tab.wide{margin-left:15px;margin-right:16px}
.tab.active{background:#1e8be6;color:#fff;width:61px;text-align:center;border-radius:12px;line-height:22px}
.search{position:absolute;left:1078px;top:1px;width:382px;height:19px;background:#fff;border:1px solid #5aa5d8;border-radius:2px;display:flex;align-items:center;justify-content:space-between;padding:0 6px 0 3px;color:#333;white-space:nowrap}
.topicons{position:absolute;left:1473px;top:1px;display:flex;align-items:center;gap:9px;height:20px}
.ti{stroke:#888}
.qm{font-size:17px;color:#777;line-height:18px;margin-left:2px}
.topicons .car{margin-left:-8px}
.promo{position:absolute;left:830px;top:-11px;width:236px;height:40px;background:#1a7fe8;color:#dbeeff;border-radius:3px;display:flex;align-items:center;padding-left:8px;white-space:nowrap}
.promo::after{content:"";position:absolute;right:-5px;top:17px;border:5px solid transparent;border-left:6px solid #1a7fe8;border-right:0}
.try{margin-left:22px;background:#3a95ee;padding:0 8px;height:20px;border-radius:2px}

/* ribbon */
.ribbon{position:relative;height:117px;flex:none;background:#fff;display:flex;padding-top:3px;border-bottom:1px solid #ddd}
.grp{flex:none;display:flex;flex-direction:column;border-right:1px solid #ebebeb;height:109px}
.rows{display:grid;grid-auto-flow:column;grid-template-rows:repeat(3,27.5px);height:82px}
.it{display:flex;align-items:center;gap:5px;white-space:nowrap;color:#555}
.lbl{margin-top:5px;display:flex;justify-content:center;align-items:center;color:#555;white-space:nowrap}
.g1 .lbl,.g5 .lbl,.g6 .lbl,.g7 .lbl{margin-top:8px}
.g1{width:160px}.g1 .rows{margin-left:-6px;grid-template-columns:67px 1fr}.g1 .lbl{justify-content:flex-start;padding-left:8px}
.g2{width:232px}.g2 .rows{padding-left:8px;grid-template-columns:95px 1fr}
.g3{width:331px}.g3 .rows{padding-left:10px;grid-template-columns:80px 133px 1fr}
.g4{width:249px}.g4 .rows{padding-left:10px;grid-template-columns:64px 66px 74px 1fr}
.g5{width:80px}.g5 .rows{padding-left:9px;grid-template-columns:38px 1fr}
.g6{width:79px}.g6 .rows{padding-left:8px;grid-template-columns:29px 1fr}
.g7{width:94px}
.g8{width:372px;border-right:0}.g8 .rows{padding-left:8px;grid-template-columns:41px 25px 39px 122px 1fr}
.g8 .it{gap:3px}.g8 .rows .it .car{margin-left:5px}
.big{height:82px;display:flex;flex-direction:column;align-items:center;padding-right:22px;color:#555}
.bigico{width:38px;height:42px;fill:none;stroke:#555;stroke-width:1.800;flex:none}
.bb{stroke:#3a8fd8}
.big span{margin-top:3px}.big .car{margin:7px 0 0}
.chk{width:16px;height:16px;margin:0 3px 0 -1px;flex:none;background:#2f7fd4;border-radius:2px;color:#fff;font-size:12px;line-height:16px;text-align:center}
.collapse{position:absolute;left:1571px;top:93px;width:36px;height:37px;background:#555;border-radius:16px 0 0 16px;color:#ddd;font-size:20px;line-height:33px;padding-left:11px}

/* selector bar */
.selbar{height:32px;flex:none;display:flex;align-items:center;gap:6px;background:#f0f0f0;border-bottom:1px solid #e2e2e2}
.sel{width:117px;height:25px;background:#fff;border-radius:2px;display:flex;align-items:center;justify-content:space-between;padding:0 8px 0 4px;color:#555}
.sel.s1{width:122px;padding-left:9px}

/* work area */
.work{height:794px;flex:none;display:flex;background:#f2f2f2;min-height:0}
.stub{position:relative;width:43px;flex:none;background:#fff;border-right:1px solid #ddd;display:flex;flex-direction:column;overflow:hidden}
.phead{height:14px;flex:none;background:#e6e6e6;position:relative}
.x{position:absolute;right:5px;top:-3px;color:#a8a8a8;font-size:11px;line-height:20px}
.stub-top{height:65px;border-bottom:1px solid #e3e3e3;flex:none}
.stub-list{display:flex;flex-direction:column}
.sr{height:33.6px;flex:none;display:flex;align-items:center;white-space:nowrap;color:#555;padding-bottom:2px}
.sr b{width:26px;height:29px;background:#f1f1f1}
.sr b.on{background:#d6e7fa}
.sr .cut{margin-left:-2px;color:#333;font-weight:700}
.stub-scroll{position:absolute;left:30px;top:171px;width:10px;height:530px;background:#cfcfcf;border-radius:5px}

.panels{width:370px;flex:none;margin-left:7px;display:flex;flex-direction:column;gap:5px}
.panel{position:relative;background:#fff;border:1px solid #e0e0e0;border-top:0;display:flex;flex-direction:column;overflow:hidden}
.panel.top{height:453px;flex:none}
.panel.low{flex:1}
.ptabs{height:27px;flex:none;display:flex;background:#f0f0f0;border-bottom:1px solid #e0e0e0}
.ptab{width:77px;text-align:center;line-height:27px}
.ptab.on{background:#f0f0f0;color:#333}
.ptab.strong{font-weight:700}
.ptab.off{background:#dcdcdc;color:#9a9a9a}
.ptools{height:33px;flex:none;display:flex;align-items:center;position:relative;padding-left:5px;border-bottom:1px solid #eee;gap:15px}
.pt{display:flex;align-items:center;gap:4px;white-space:nowrap;color:#555}
.pt.p1{margin-right:-5px}
.more{position:absolute;right:2px;top:6px;font-size:8px;color:#666;letter-spacing:-1px}
.psearch{height:24px;flex:none;display:flex;align-items:center;justify-content:space-between;padding:0 8px 0 2px;color:#aaa;border-bottom:1px solid #ececec}
.tree{padding-top:4px;flex:1;overflow:hidden}
.tree li{height:28.7px;display:flex;align-items:center;white-space:nowrap;color:#555}
.n0{padding-left:15px}.n1{padding-left:39px}.n2{padding-left:71px}
.tw{width:0;height:0;border:4px solid transparent;border-top:5px solid #777;border-bottom:0;margin-right:5px}
.n2 span{width:104px;height:24px;line-height:24px;padding-left:5px;border-radius:3px}
.cur span{background:#c7ddf3}
.tree-scroll{position:absolute;left:356px;top:118px;width:9px;height:31px;background:#ccc;border-radius:4px}
.ptools.lay{gap:15px;padding-left:5px;border:0}
.ltable{width:369px;border-collapse:collapse;table-layout:fixed;margin-top:0}
.ltable th,.ltable td{border:1px solid #e3e3e3;height:25px;padding:0;font-weight:400;color:#555}
.ltable td{padding-left:5px}
.ltable td.c{padding:0;text-align:center}
.lc1{width:60px}.lc2{width:44px}
.box{display:inline-block;width:16px;height:16px;border:1px solid #999;border-radius:2px;vertical-align:middle}
.tri{display:inline-block;width:0;height:0;border:4px solid transparent;border-left:5px solid #777;border-right:0;margin-left:13px;vertical-align:middle}

.splitter{width:6px;flex:none;background:#e8e8e8;position:relative}
.splitter span{position:absolute;left:1px;top:194px;width:5px;height:120px;background:#555}

.rightcol{width:1181px;flex:none;display:flex;flex-direction:column}
.viewport{position:relative;height:509px;flex:none;background:#000;overflow:hidden}
.scene{display:block;width:1181px;height:509px}
.grid{fill:none;stroke:#1f661f;stroke-width:1}
.beam path{stroke:#1d9e2a}
.dim{font-family:"Noto Sans",sans-serif;font-size:21px;fill:#e8e8e8}
.gl{font-family:"Noto Sans",sans-serif;font-size:21px;fill:#ddd}
.ax{font-family:"Noto Sans",sans-serif;font-size:17px}
.bt{font-family:"Noto Sans",sans-serif;font-size:8px;fill:#222}
.wt{font-family:"Noto Sans",sans-serif;font-size:7px;fill:#bbb}
.hint{position:absolute;left:0;right:0;bottom:0;height:33px;background:rgba(54,54,54,.82);display:flex;align-items:center;padding-left:434px;color:#f0f0f0}
.hint-p{position:absolute;left:318px;top:5px;color:#777;font-size:19px}
.hint-ic{width:20px;height:20px;fill:none;stroke:#eee;stroke-width:1.300;margin-right:5px}
.hint-t{font-weight:500;white-space:nowrap}
.vtools{position:absolute;right:0;top:0;width:38px;height:294px;background:#fff;display:flex;flex-direction:column;align-items:center;padding-top:13px;gap:5px}
.vt{width:28px;height:30px;fill:none;stroke:#667;stroke-width:1.100;flex:none}
.v2d{font:700 8px "Noto Sans",sans-serif;fill:#3a8fd8;stroke:none}
.vtools .b{stroke:#4a90d0}
.tridown{width:0;height:0;border:4px solid transparent;border-top:5px solid #444;border-bottom:0;margin:1px 0 2px}
.vsep{width:22px;height:1px;background:#888;margin:-1px 0 -2px}
.poi{position:absolute;left:1088px;top:424px;width:64px;height:64px;background:#fff;display:flex;flex-direction:column}
.poi-row{height:32px;display:flex;align-items:center;justify-content:space-between;padding-left:3px;color:#aaa;font-size:14px}
.poi-row b{width:19px;height:24px;background:#e6e6e6;margin-right:1px}
.poi-btn{height:32px;width:62px;margin:0 1px;padding:0;background:#eaf0f6;border:2px solid #1c78b4;font:inherit;color:#222}

.vsplit{height:8px;flex:none;background:#ededed;position:relative}
.vsplit span{position:absolute;left:532px;top:0;width:120px;height:4px;background:#7c7c7c}
.tpanel{position:relative;flex:1;background:#fff;display:flex;flex-direction:column;overflow:hidden}
.tp-title{height:36px;flex:none;background:linear-gradient(#e6e6e6 0 4px,#f1f1f1 4px);padding:14px 0 0 11px;color:#888;line-height:20px}
.tp-tools{height:36px;flex:none;display:flex;align-items:center;gap:13.500px;padding-left:8px;white-space:nowrap;color:#444}
.tp-tools .dis{color:#bcbcbc}
.tbl-wrap{display:flex;flex:none}
.rownums{width:8px;flex:none;display:flex;flex-direction:column;font-size:12px;line-height:25px;color:#555}
.rh{height:40px}
.rn{height:25.500px;overflow:hidden;text-align:center;border-bottom:1px solid #e5e5e5}
.rn.on{background:#5f9fe0;color:#fff}
.ptable{width:1171px;border-collapse:collapse;table-layout:fixed;margin-left:1px}
.w74{width:74px}.w73{width:73px}.w49{width:49px}.w50{width:50px}.w48{width:48px}.w122{width:122px}.w97{width:97px}.w98{width:98px}
.ptable th,.ptable td{border:1px solid #e5e5e5;padding:0;height:20px;line-height:18px;font-weight:400;color:#555;white-space:nowrap;overflow:hidden}
.ptable td{height:25.500px;padding-left:5px;line-height:20px}
.ptable td.ctr{padding:0;text-align:center}
.ptable td.pos{line-height:23px;padding-left:5px}
.ptable th.hl{background:#6fb1f0;color:#fff}
.ptable th.shift{padding-left:94px}
.ptable u{text-decoration-color:#888}
.ptable td.edit{position:relative;border:2px solid #5d9fe0;padding-left:2px;overflow:visible}
.ed-sel{background:#9dbde0;color:#333;padding:0 1px}
.edit .car{margin-left:8px}
.ed-dot{position:absolute;right:-3px;bottom:-3px;width:5px;height:5px;background:#5d9fe0}
.pointer{position:absolute;left:284px;top:128px;width:16px;height:24px;fill:#fff;stroke:#333;stroke-width:1}
.tp-fill{flex:1}
.hscroll{height:13px;flex:none;position:relative;border-bottom:1px solid #e5e5e5;margin-bottom:0}
.thumb{position:absolute;left:18px;top:0;width:355px;height:10px;background:#c8c8c8;border-radius:5px}
.hl-arrow,.hr-arrow{position:absolute;top:-6px;color:#444;font-size:14px}
.hl-arrow{left:5px}.hr-arrow{right:6px}
.sogou{position:absolute;left:998px;top:4px;width:183px;height:30px;display:flex;align-items:center;gap:12px;background:#f6f8fb;border:1px solid #e6eaef;border-right:0;padding-left:17px}
.s-logo{position:absolute;left:-30px;top:-4px;width:36px;height:34px;background:#e8651f;border-radius:6px;transform:rotate(-15deg);color:#fff;font:700 32px/34px "Liberation Sans",sans-serif;text-align:center}
.s-a{color:#2a7fd4;font-size:22px;width:18px;font-family:"Noto Sans",sans-serif}
.s-p{color:#2a7fd4;font-weight:700;width:12px;margin-left:2px}
.s-i{width:17px;height:17px;fill:none;stroke:#2a7fd4;stroke-width:1.400;flex:none}

/* status */
.status{height:39px;flex:none;background:#f8f8f8;border-top:1px solid #e2e2e2;display:flex;align-items:center;white-space:nowrap;color:#555;position:relative}
.st2{margin-left:0}.st3{margin-left:19px}.st4{margin-left:25px}
.st1{width:30px;display:inline-block;margin-right:0}
.sbtns{position:absolute;left:389px;top:5px;display:flex;gap:4px}
.sb{height:30px;display:flex;align-items:center;justify-content:center;background:#fff;border:1px solid #bbb;border-radius:3px}
.sb svg{width:20px;height:20px;fill:none;stroke:#777;stroke-width:1.100;flex:none}
.sb svg.lt{stroke:#c0c0c0}
.sb .car{margin-left:3px}
.sb.on{background:#cfe4fa;border-color:#7fb2e0}
.w30{width:30px}.w43{width:43px}.w41{width:41px}.w42{width:42px}.w28{width:28px}

/* taskbar */
.taskbar{height:48px;flex:none;background:#1b2c3c;display:flex;position:relative}
.tk{width:58.700px;flex:none;display:flex;align-items:center;justify-content:center;position:relative}
.tk.run::after{content:"";position:absolute;left:5px;right:5px;bottom:0;height:2px;background:#72a9d6}
.tk.active{background:#3f505e}
.tki{width:30px;height:30px}
.tile{width:29px;height:29px;border-radius:4px;display:flex;align-items:center;justify-content:center}
.cloud{background:#0d6fe8}
.cloud svg{width:26px;height:26px}
.ttile{background:#e8f4fc;color:#1883d8;font:700 26px/29px "Liberation Sans",sans-serif}
.cadt{background:#1f5fa8;border:2px solid #4a8fd0;color:#bcdcf5;font:700 11px/14px "Liberation Sans",sans-serif}
.tray{position:absolute;left:1280px;top:0;width:300px;height:48px;display:flex;align-items:center;color:#e7eef5}
.tr-up{font-size:18px;width:14px;margin-top:4px}
.tr-i{width:18px;height:22px;margin-left:14px;flex:none}
.tr-i:nth-of-type(3){margin-left:9px}
.tr-a{font-size:18px;margin-left:10px;font-family:"Noto Sans",sans-serif}
.tr-s{width:16px;height:22px;margin-left:18px;background:#e8651f;border-radius:4px;color:#fff;text-align:center;font:700 16px/22px "Liberation Sans",sans-serif}
.clock{display:flex;flex-direction:column;align-items:center;width:80px;margin-left:25px;font-size:14px;line-height:23px}
.tr-n{width:20px;height:22px;margin-left:25px;flex:none}
.greenbar{position:absolute;left:1602px;top:937px;width:5px;height:95px;background:#0cb46f}
.screen::before{content:"";position:absolute;z-index:2;left:1602px;top:0;width:5px;height:143px;background:#0cb46f}
```
